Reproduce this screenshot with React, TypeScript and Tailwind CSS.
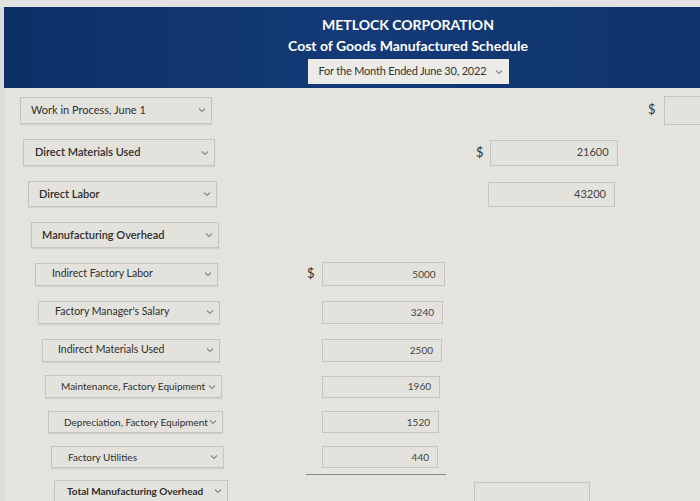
import React from "react";

const Chevron = () => (
  <svg width="8" height="6" viewBox="0 0 8 6" className="shrink-0">
    <path d="M1 1.5 L4 4.5 L7 1.5" fill="none" stroke="#8a8a8a" strokeWidth="1.1" />
  </svg>
);

type SelProps = { label: string; cls: string; text: string };
const Sel = ({ label, cls, text }: SelProps) => (
  <div
    className={`flex shrink-0 items-center justify-between border border-[#c6c4be] bg-[#e4e2dc] shadow-[0_1px_1px_rgba(0,0,0,0.08)] ${cls}`}
  >
    <span className={`whitespace-nowrap text-[#2e2e2e] ${text}`}>{label}</span>
    <Chevron />
  </div>
);

type AmtProps = { value?: string; cls: string };
const Amt = ({ value, cls }: AmtProps) => (
  <div
    className={`flex shrink-0 items-center justify-end border border-[#c6c4be] bg-[#e4e2dc] pr-[8px] text-[#444] ${cls}`}
  >
    {value}
  </div>
);

const Dollar = ({ cls }: { cls: string }) => (
  <span className={`shrink-0 text-[13px] text-[#333] ${cls}`}>$</span>
);

export default function App() {
  return (
    <div
      className="relative h-[501px] w-[700px] overflow-hidden bg-[#dcdcdc]"
      style={{ fontFamily: "Lato, 'Open Sans', sans-serif" }}
    >
      <div className="h-[7px] bg-[#e2e2e2]" />
      {/* Header */}
      <div className="ml-[4px] flex h-[81px] flex-col items-center bg-[#0f3571] bg-gradient-to-r from-[#0c2f66] via-[#143b78] to-[#0e336d] pl-[112px] pt-[9px]">
        <div className="whitespace-nowrap text-[14px] font-bold leading-[18px] text-white">
          METLOCK CORPORATION
        </div>
        <div className="mt-[3px] whitespace-nowrap text-[14px] font-bold leading-[18px] text-white">
          Cost of Goods Manufactured Schedule
        </div>
        <div className="mt-[4px] flex h-[25px] w-[201px] shrink-0 items-center justify-between bg-[#ecebe7] pl-[11px] pr-[6px]">
          <span className="whitespace-nowrap text-[11px] tracking-[-0.2px] text-[#333]">
            For the Month Ended June 30, 2022
          </span>
          <Chevron />
        </div>
      </div>

      {/* Body */}
      <div className="ml-[5px] h-[413px] bg-[#e5e3dd] pt-[8px]">
        {/* Row 1 */}
        <div className="flex h-[28px] items-center">
          <Sel
            label="Work in Process, June 1"
            cls="ml-[15px] h-[27px] w-[192px] pl-[10px] pr-[5px]"
            text="text-[11px]"
          />
          <Dollar cls="ml-[436px]" />
          <Amt cls="ml-[8px] h-[29px] w-[60px]" />
        </div>
        {/* Row 2 */}
        <div className="mt-[15px] flex h-[27px] items-center">
          <Sel
            label="Direct Materials Used"
            cls="ml-[18px] h-[27px] w-[192px] pl-[11px] pr-[5px]"
            text="text-[11px] font-semibold"
          />
          <Dollar cls="ml-[261px]" />
          <Amt value="21600" cls="ml-[6px] h-[26px] w-[128px] text-[11px]" />
        </div>
        {/* Row 3 */}
        <div className="mt-[15px] flex h-[26px] items-center">
          <Sel
            label="Direct Labor"
            cls="ml-[23px] h-[26px] w-[189px] pl-[10px] pr-[5px]"
            text="text-[11px] font-semibold"
          />
          <Amt value="43200" cls="ml-[271px] h-[25px] w-[127px] text-[11px]" />
        </div>
        {/* Row 4 */}
        <div className="mt-[15px] flex h-[26px] items-center">
          <Sel
            label="Manufacturing Overhead"
            cls="ml-[26px] h-[26px] w-[188px] pl-[10px] pr-[5px]"
            text="text-[11px] font-semibold"
          />
        </div>
        {/* Row 5 */}
        <div className="mt-[14px] flex h-[24px] items-center">
          <Sel
            label="Indirect Factory Labor"
            cls="ml-[30px] h-[23px] w-[183px] pl-[16px] pr-[5px]"
            text="text-[10.5px]"
          />
          <Dollar cls="ml-[89px]" />
          <Amt value="5000" cls="ml-[7px] h-[24px] w-[123px] text-[10px]" />
        </div>
        {/* Row 6 */}
        <div className="mt-[14px] flex h-[24px] items-center">
          <Sel
            label="Factory Manager's Salary"
            cls="ml-[33px] h-[23px] w-[182px] pl-[16px] pr-[5px]"
            text="text-[10.5px]"
          />
          <Amt value="3240" cls="ml-[102px] h-[23px] w-[121px] text-[10px]" />
        </div>
        {/* Row 7 */}
        <div className="mt-[14px] flex h-[24px] items-center">
          <Sel
            label="Indirect Materials Used"
            cls="ml-[37px] h-[23px] w-[178px] pl-[15px] pr-[5px]"
            text="text-[10.5px]"
          />
          <Amt value="2500" cls="ml-[102px] h-[23px] w-[120px] text-[10px]" />
        </div>
        {/* Row 8 */}
        <div className="mt-[13px] flex h-[23px] items-center">
          <Sel
            label="Maintenance, Factory Equipment"
            cls="ml-[40px] h-[23px] w-[177px] pl-[15px] pr-[5px]"
            text="text-[10px]"
          />
          <Amt value="1960" cls="ml-[100px] h-[22px] w-[118px] text-[10px]" />
        </div>
        {/* Row 9 */}
        <div className="mt-[13px] flex h-[22px] items-center">
          <Sel
            label="Depreciation, Factory Equipment"
            cls="ml-[43px] h-[22px] w-[175px] pl-[15px] pr-[5px]"
            text="text-[10px]"
          />
          <Amt value="1520" cls="ml-[99px] h-[22px] w-[117px] text-[10px]" />
        </div>
        {/* Row 10 */}
        <div className="mt-[13px] flex h-[22px] items-center">
          <Sel
            label="Factory Utilities"
            cls="ml-[46px] h-[22px] w-[173px] pl-[16px] pr-[5px]"
            text="text-[10px]"
          />
          <Amt value="440" cls="ml-[98px] h-[22px] w-[116px] text-[10px]" />
        </div>
        {/* Underline */}
        <div className="ml-[301px] mt-[6px] h-[1px] w-[140px] bg-[#8c8a86]" />
        {/* Row 11 */}
        <div className="mt-[5px] flex h-[22px] items-start">
          <Sel
            label="Total Manufacturing Overhead"
            cls="ml-[49px] h-[22px] w-[174px] pl-[12px] pr-[5px]"
            text="text-[10px] font-bold"
          />
          <Amt cls="ml-[246px] mt-[2px] h-[22px] w-[116px]" />
        </div>
      </div>
    </div>
  );
}
